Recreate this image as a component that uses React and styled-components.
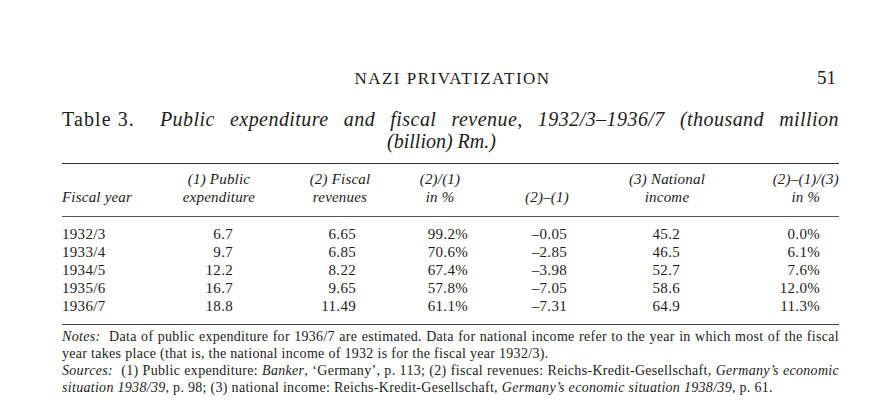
import * as React from "react";
import styled, { createGlobalStyle } from "styled-components";

const GlobalStyle = createGlobalStyle`
  html, body {
    margin: 0;
    padding: 0;
    background: #fff;
  }
  body {
    font-family: "Liberation Serif", "Times New Roman", serif;
    color: #1c1c1c;
  }
`;

const COLS = "97px 120px 122px 78px 136px 104px 120px";

const rows = [
  ["1932/3", "6.7", "6.65", "99.2%", "–0.05", "45.2", "0.0%"],
  ["1933/4", "9.7", "6.85", "70.6%", "–2.85", "46.5", "6.1%"],
  ["1934/5", "12.2", "8.22", "67.4%", "–3.98", "52.7", "7.6%"],
  ["1935/6", "16.7", "9.65", "57.8%", "–7.05", "58.6", "12.0%"],
  ["1936/7", "18.8", "11.49", "61.1%", "–7.31", "64.9", "11.3%"],
];

const heads = [
  { lines: ["Fiscal year"], align: "flex-start" },
  { lines: ["(1) Public", "expenditure"], align: "center" },
  { lines: ["(2) Fiscal", "revenues"], align: "center" },
  { lines: ["(2)/(1)", "in %"], align: "center" },
  { lines: ["(2)–(1)"], align: "center" },
  { lines: ["(3) National", "income"], align: "center" },
  { lines: ["(2)–(1)/(3)", "in %"], align: "flex-end" },
];

// right padding of each numeric column, so figures line up like the print
const pads = [0, 46, 45, 11, 48, 39, 19];

const Page = styled.div`
  padding: 68px 56px 0 62px;
  width: 777px;
`;

const RunningHead = styled.header`
  display: grid;
  grid-template-columns: 1fr auto 1fr;
  align-items: baseline;
  line-height: 20px;
`;

const HeadTitle = styled.div`
  grid-column: 2;
  font-size: 17px;
  letter-spacing: 1.5px;
  padding-left: 4px;
`;

const Folio = styled.div`
  grid-column: 3;
  justify-self: end;
  font-size: 19px;
  padding-right: 3px;
`;

const Caption = styled.div`
  margin-top: 19px;
  font-size: 20px;
  line-height: 22px;
`;

const CaptionLine = styled.div`
  white-space: nowrap;
  text-align: ${(p) => (p.$full ? "justify" : "center")};
  text-align-last: ${(p) => (p.$full ? "justify" : "center")};
  font-style: ${(p) => (p.$full ? "normal" : "italic")};
  padding-right: ${(p) => (p.$full ? 0 : 18)}px;
`;

const Label = styled.span`
  display: inline-block;
  font-style: normal;
  letter-spacing: 1.1px;
  margin-right: 25px;
  text-align-last: auto;
`;

const CaptionText = styled.i`
  letter-spacing: 0.45px;
`;

const Em = styled.i`
  font-style: italic;
`;

const HeadGrid = styled.div`
  margin-top: 10.75px;
  display: grid;
  grid-template-columns: ${COLS};
  border-top: 1px solid #333;
  border-bottom: 1px solid #555;
  padding: 6px 0 10px;
  font-size: 15px;
  line-height: 18px;
  font-style: italic;
  letter-spacing: 0.2px;
`;

const HeadCell = styled.div`
  display: flex;
  flex-direction: column;
  justify-content: flex-end;
  align-items: ${(p) => p.$align};
`;

const HeadText = styled.div`
  text-align: center;
  white-space: nowrap;
`;

const BodyGrid = styled.div`
  display: grid;
  grid-template-columns: ${COLS};
  border-bottom: 1px solid #444;
  padding: 8px 0 9px;
  font-size: 15px;
  line-height: 18px;
  letter-spacing: 0.3px;
`;

const Cell = styled.div`
  text-align: ${(p) => (p.$pad ? "right" : "left")};
  padding-right: ${(p) => p.$pad}px;
  white-space: nowrap;
`;

const Notes = styled.div`
  padding-top: 3px;
  font-size: 14px;
  line-height: 17px;
  letter-spacing: 0.3px;
`;

const NoteLine = styled.div`
  white-space: nowrap;
  text-align: ${(p) => (p.$full ? "justify" : "left")};
  text-align-last: ${(p) => (p.$full ? "justify" : "left")};
`;

export default function App() {
  return (
    <>
      <GlobalStyle />
      <Page>
        <RunningHead>
          <HeadTitle>NAZI PRIVATIZATION</HeadTitle>
          <Folio>51</Folio>
        </RunningHead>

        <Caption>
          <CaptionLine $full>
            <Label>Table 3.</Label>
            <CaptionText>
              Public expenditure and fiscal revenue, 1932/3–1936/7 (thousand
              million
            </CaptionText>
          </CaptionLine>
          <CaptionLine>(billion) Rm.)</CaptionLine>
        </Caption>

        <HeadGrid>
          {heads.map((h, i) => (
            <HeadCell key={i} $align={h.align}>
              <HeadText>
                {h.lines.map((l, j) => (
                  <div key={j}>{l}</div>
                ))}
              </HeadText>
            </HeadCell>
          ))}
        </HeadGrid>

        <BodyGrid>
          {rows.map((r, i) =>
            r.map((v, j) => (
              <Cell key={i + "-" + j} $pad={pads[j]}>
                {v}
              </Cell>
            ))
          )}
        </BodyGrid>

        <Notes>
          <NoteLine $full>
            <Em>Notes:</Em>&nbsp; Data of public expenditure for 1936/7 are
            estimated. Data for national income refer to the year in which most
            of the fiscal
          </NoteLine>
          <NoteLine>
            year takes place (that is, the national income of 1932 is for the
            fiscal year 1932/3).
          </NoteLine>
          <NoteLine $full>
            <Em>Sources:</Em>&nbsp; (1) Public expenditure: <Em>Banker</Em>,
            ‘Germany’, p. 113; (2) fiscal revenues: Reichs-Kredit-Gesellschaft,{" "}
            <Em>Germany’s economic</Em>
          </NoteLine>
          <NoteLine>
            <Em>situation 1938/39</Em>, p. 98; (3) national income:
            Reichs-Kredit-Gesellschaft,{" "}
            <Em>Germany’s economic situation 1938/39</Em>, p. 61.
          </NoteLine>
        </Notes>
      </Page>
    </>
  );
}
